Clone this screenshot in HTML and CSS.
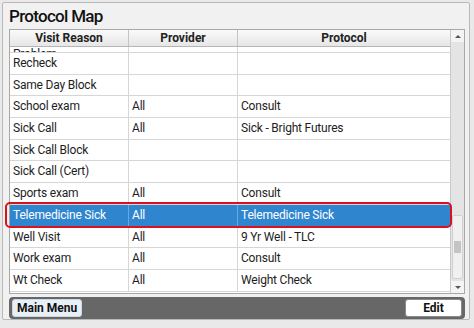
FILE: index.html
```html
<!DOCTYPE html>
<html lang="en">
<head>
	<meta charset="UTF-8">
	<meta name="viewport" content="width=device-width, initial-scale=1.0">
	<title>Protocol Map</title>
	<link rel="stylesheet" href="styles.css">
</head>
<body>
	<div class="panel">
		<h1 class="title">Protocol Map</h1>

		<!-- Grid with header, rows and scrollbar -->
		<div class="grid">
			<div class="table">
				<div class="row head">
					<div class="cell">Visit Reason</div>
					<div class="cell">Provider</div>
					<div class="cell">Protocol</div>
				</div>
				<div class="rows">
					<div class="row cut">
						<div class="cell">Problem</div>
						<div class="cell"></div>
						<div class="cell"></div>
					</div>
					<div class="row"><div class="cell">Recheck</div><div class="cell"></div><div class="cell"></div></div>
					<div class="row"><div class="cell">Same Day Block</div><div class="cell"></div><div class="cell"></div></div>
					<div class="row"><div class="cell">School exam</div><div class="cell">All</div><div class="cell">Consult</div></div>
					<div class="row"><div class="cell">Sick Call</div><div class="cell">All</div><div class="cell">Sick - Bright Futures</div></div>
					<div class="row"><div class="cell">Sick Call Block</div><div class="cell"></div><div class="cell"></div></div>
					<div class="row"><div class="cell">Sick Call (Cert)</div><div class="cell"></div><div class="cell"></div></div>
					<div class="row"><div class="cell">Sports exam</div><div class="cell">All</div><div class="cell">Consult</div></div>
					<div class="row selected"><div class="cell">Telemedicine Sick</div><div class="cell">All</div><div class="cell">Telemedicine Sick</div></div>
					<div class="row"><div class="cell">Well Visit</div><div class="cell">All</div><div class="cell">9 Yr Well - TLC</div></div>
					<div class="row"><div class="cell">Work exam</div><div class="cell">All</div><div class="cell">Consult</div></div>
					<div class="row"><div class="cell">Wt Check</div><div class="cell">All</div><div class="cell">Weight Check</div></div>
				</div>
			</div>
			<div class="scrollbar">
				<div class="arrow up"></div>
				<div class="track">
					<div class="thumb"><div class="grip"></div></div>
				</div>
				<div class="arrow down"></div>
			</div>
		</div>

		<div class="footer">
			<button class="btn menu">Main Menu</button>
			<button class="btn edit">Edit</button>
		</div>
	</div>
</body>
</html>
```

FILE: styles.css
```css
body {
	background-color: #e9e9e9;
	font-family: Roboto, "Liberation Sans", sans-serif;
	color: #1e1e1e;
	margin: 0;
	padding: 0;
}

.panel {
	margin: 2px 4px 0 2px;
	height: 318px;
	box-sizing: border-box;
	border: 1px solid #b9b9b9;
	border-radius: 2px;
	background-color: #f1f1f1;
	padding: 0 4px 0 6px;
	display: flex;
	flex-direction: column;
}

.title {
	font-size: 17px;
	font-weight: 500;
	letter-spacing: -0.7px;
	margin: 3px 0 3px 0;
	height: 20px;
	line-height: 20px;
	color: #111;
}

.grid {
	display: flex;
	border: 1px solid #a8a8a8;
	background-color: #fff;
	height: 265px;
	box-sizing: border-box;
}

.table {
	flex: 1;
	display: flex;
	flex-direction: column;
}

.row {
	display: grid;
	grid-template-columns: 119px 109px 1fr;
	height: 21.7px;
	box-sizing: border-box;
	border-bottom: 1px solid #d6d6d6;
	font-size: 12px;
	letter-spacing: -0.2px;
}

.cell {
	padding-left: 3px;
	border-right: 1px solid #d6d6d6;
	line-height: 20.7px;
	white-space: nowrap;
	overflow: hidden;
}

.cell:last-child {
	border-right: none;
}

.head {
	height: 17px;
	background: linear-gradient(#fafafa, #e6e6e6);
	border-bottom: 1px solid #b5b5b5;
	font-weight: 700;
	letter-spacing: 0;
	color: #222;
}

.head .cell {
	text-align: center;
	line-height: 16px;
	padding-left: 0;
	border-right-color: #c4c4c4;
}

/* row scrolled mostly out of view */
.cut {
	height: 6px;
	align-items: end;
	overflow: hidden;
}

.cut .cell {
	height: 15px;
	line-height: 15px;
}

.selected {
	position: relative;
	background-color: #2f86cf;
	color: #fff;
	border-bottom-color: #2f86cf;
}

.selected .cell {
	border-right-color: #6aa7dc;
}

.selected::after {
	content: "";
	position: absolute;
	left: -5px;
	right: -2px;
	top: -3px;
	bottom: -2px;
	border: 2px solid #d9121d;
	border-radius: 5px;
}

.scrollbar {
	width: 13px;
	border-left: 1px solid #c9c9c9;
	background-color: #e4e4e4;
	display: flex;
	flex-direction: column;
}

.arrow {
	height: 12px;
	display: flex;
	align-items: center;
	justify-content: center;
	background-color: #f4f4f4;
}

.arrow::before {
	content: "";
	border-left: 3px solid transparent;
	border-right: 3px solid transparent;
}

.up::before {
	border-bottom: 3px solid #555;
}

.down::before {
	border-top: 3px solid #555;
}

.track {
	flex: 1;
	display: flex;
	flex-direction: column;
	justify-content: flex-end;
	padding: 0 1px;
}

.thumb {
	height: 62px;
	margin-bottom: 2px;
	background-color: #f0f0f0;
	border: 1px solid #d0d0d0;
	border-radius: 2px;
	display: flex;
	align-items: center;
	justify-content: center;
}

.grip {
	width: 7px;
	height: 12px;
	background-image: radial-gradient(#c4c4c4 0.8px, transparent 1px);
	background-size: 2px 2px;
}

.footer {
	margin-top: 3px;
	height: 22px;
	background-color: #676767;
	border-radius: 4px;
	display: flex;
	justify-content: space-between;
	align-items: center;
	padding: 0 3px;
	width: 456px;
	box-sizing: border-box;
}

.btn {
	font-family: Roboto, "Liberation Sans", sans-serif;
	font-size: 12px;
	font-weight: 700;
	color: #111;
	height: 18px;
	padding: 0 4px;
	border-radius: 3px;
	cursor: pointer;
}

.menu {
	background-color: #e7eff7;
	border: 1px solid #cfd8e2;
}

.edit {
	width: 57px;
	background-color: #fff;
	border: 1px solid #8a8a8a;
}
```
